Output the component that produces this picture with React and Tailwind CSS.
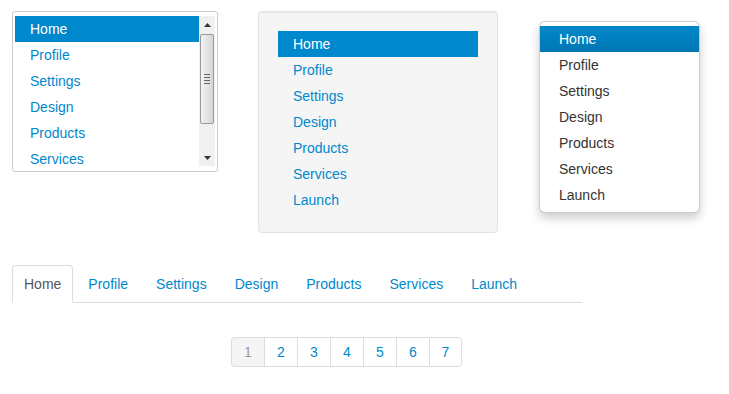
import React from 'react';

const items = ['Home', 'Profile', 'Settings', 'Design', 'Products', 'Services', 'Launch'];

function FakeScrollbar() {
  return (
    <div className="flex flex-col w-[16px] h-[150px] bg-[#f0f0f0] shrink-0">
      <div className="h-[18px] flex items-center justify-center">
        <svg width="7" height="4" viewBox="0 0 7 4"><path d="M0 4 L3.5 0 L7 4 Z" fill="#333" /></svg>
      </div>
      <div className="h-[90px] mx-[1px] rounded-[2px] border border-[#9a9a9a] bg-gradient-to-r from-[#f2f2f2] to-[#d6d6d6] flex items-center justify-center">
        <div className="flex flex-col gap-[2px]">
          <div className="w-[6px] h-px bg-[#666]" />
          <div className="w-[6px] h-px bg-[#666]" />
          <div className="w-[6px] h-px bg-[#666]" />
          <div className="w-[6px] h-px bg-[#666]" />
        </div>
      </div>
      <div className="flex-1 flex items-end justify-center pb-[6px]">
        <svg width="7" height="4" viewBox="0 0 7 4"><path d="M0 0 L3.5 4 L7 0 Z" fill="#333" /></svg>
      </div>
    </div>
  );
}

export default function App() {
  return (
    <div className="w-[729px] h-[394px] bg-white overflow-hidden text-[14px]" style={{ fontFamily: '"Liberation Sans", Arial, sans-serif' }}>
      {/* top row */}
      <div className="flex items-start pl-[12px] pt-[11px]">
        {/* select-style list box, only the visible rows */}
        <div className="w-[206px] h-[161px] border border-[#ccc] rounded-[3px] pt-[4px] pl-[2px] pr-[2px] flex">
          <div className="flex-1 h-[150px] overflow-hidden">
            {items.slice(0, 6).map((it, i) => (
              <div
                key={it}
                className={`h-[26px] leading-[26px] pl-[15px] ${i === 0 ? 'bg-[#0088cc] text-white' : 'text-[#0088cc]'}`}
              >
                {it}
              </div>
            ))}
          </div>
          <FakeScrollbar />
        </div>

        {/* well nav list */}
        <div className="ml-[40px] w-[240px] h-[222px] border border-[#e3e3e3] rounded-[4px] bg-[#f5f5f5] shadow-[inset_0_1px_1px_rgba(0,0,0,0.05)] p-[19px]">
          {items.map((it, i) => (
            <div
              key={it}
              className={`h-[26px] leading-[26px] pl-[15px] ${i === 0 ? 'bg-[#0088cc] text-white' : 'text-[#0088cc]'}`}
            >
              {it}
            </div>
          ))}
        </div>

        {/* dropdown menu */}
        <div className="ml-[41px] mt-[10px] w-[161px] border border-black/20 rounded-[6px] bg-white py-[4px] shadow-[0_5px_10px_rgba(0,0,0,0.2)]">
          {items.map((it, i) => (
            <div
              key={it}
              className={`h-[26px] leading-[26px] pl-[19px] ${i === 0 ? 'bg-gradient-to-b from-[#0088cc] to-[#0077b3] text-white' : 'text-[#333]'}`}
            >
              {it}
            </div>
          ))}
        </div>
      </div>

      {/* tabs */}
      <div className="ml-[12px] mt-[32px] w-[570px] flex border-b border-[#ddd]">
        {items.map((it, i) => (
          <div key={it} className="-mb-px mr-[2px]">
            <div
              className={`py-[8px] leading-[20px] border rounded-t-[4px] ${
                i === 0 ? 'px-[11px] border-[#ddd] border-b-transparent bg-white text-[#555]' : 'px-[12px] border-transparent text-[#0088cc]'
              }`}
            >
              {it}
            </div>
          </div>
        ))}
      </div>

      {/* pagination */}
      <div className="ml-[231px] mt-[34px] flex">
        {[1, 2, 3, 4, 5, 6, 7].map((n, i) => (
          <div
            key={n}
            className={`w-[33px] h-[30px] flex items-center justify-center border-t border-b border-l border-[#ddd] ${
              i === 0 ? 'bg-[#f5f5f5] text-[#999] rounded-l-[4px]' : 'bg-white text-[#0088cc]'
            } ${i === 6 ? 'border-r rounded-r-[4px]' : ''}`}
          >
            {n}
          </div>
        ))}
      </div>
    </div>
  );
}
